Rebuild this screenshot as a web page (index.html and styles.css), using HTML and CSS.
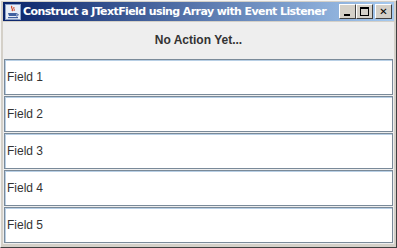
FILE: index.html
```html
<!DOCTYPE html>
<html lang="en">
<head>
    <meta charset="UTF-8">
    <title>Construct a JTextField using Array with Event Listener</title>
    <link rel="stylesheet" href="styles.css">
</head>
<body>
    <div class="ventana">
        <div class="titulo">
            <svg class="icono" width="16" height="16" viewBox="0 0 16 16">
                <rect x="0.5" y="0.5" width="15" height="15" fill="#e8eef8" stroke="#8aa0c8"/>
                <path d="M7 2 C5 4 9 5 7 7" stroke="#d04020" stroke-width="1.2" fill="none"/>
                <path d="M9 3 C8 5 10 5 9 7" stroke="#d04020" stroke-width="1" fill="none"/>
                <path d="M3 9 L12 9 L11 12 L4 12 Z" fill="#4060a0"/>
                <path d="M12 10 C14 10 14 12 11 12" stroke="#4060a0" fill="none"/>
                <rect x="3" y="13" width="10" height="1.2" fill="#4060a0"/>
            </svg>
            <span class="texto-titulo">Construct a JTextField using Array with Event Listener</span>
            <div class="botones">
                <span class="boton"><i class="min"></i></span>
                <span class="boton"><i class="max"></i></span>
                <span class="boton cerrar">✕</span>
            </div>
        </div>
        <div class="contenido">
            <div class="etiqueta">No Action Yet...</div>
            <div class="campo">Field 1</div>
            <div class="campo">Field 2</div>
            <div class="campo">Field 3</div>
            <div class="campo">Field 4</div>
            <div class="campo">Field 5</div>
        </div>
    </div>
</body>
</html>
```
FILE: styles.css
```css
body {
    margin: 0;
    padding: 0;
    background-color: #d4d0c8;
}
.ventana {
    width: 397px;
    height: 248px;
    box-sizing: border-box;
    padding: 1px 2px 3px 2px;
    background-color: #d4d0c8;
    border-left: 1px solid #f4f4f4;
    border-top: 1px solid #f4f4f4;
    border-right: 1px solid #404040;
    border-bottom: 1px solid #404040;
    display: flex;
    flex-direction: column;
}
.titulo {
    height: 19px;
    display: flex;
    align-items: center;
    padding: 0 2px 0 2px;
    margin-bottom: 1px;
    background: linear-gradient(to right, #0a246a, #a6caf0);
    color: #fff;
    font-family: "DejaVu Sans", sans-serif;
    font-size: 11px;
    font-weight: bold;
    flex-shrink: 0;
}
.icono {
    margin-right: 2px;
}
.texto-titulo {
    flex: 1;
    white-space: nowrap;
    letter-spacing: -0.6px;
}
.botones {
    display: flex;
}
.boton {
    width: 15px;
    height: 13px;
    background-color: #d4d0c8;
    border-top: 1px solid #fff;
    border-left: 1px solid #fff;
    border-right: 1px solid #404040;
    border-bottom: 1px solid #404040;
    position: relative;
    color: #000;
    font-size: 10px;
    font-weight: bold;
    line-height: 13px;
    text-align: center;
}
.cerrar {
    margin-left: 2px;
    font-family: "DejaVu Sans", sans-serif;
}
.min {
    position: absolute;
    left: 4px;
    bottom: 2px;
    width: 6px;
    height: 2px;
    background-color: #000;
}
.max {
    position: absolute;
    left: 3px;
    top: 2px;
    width: 7px;
    height: 6px;
    border: 1px solid #000;
    border-top-width: 2px;
}
.contenido {
    flex: 1;
    background-color: #eeeeee;
    display: grid;
    grid-template-rows: repeat(6, 1fr);
    gap: 1px;
    padding: 0 1px 1px 1px;
    font-family: "Liberation Sans", Arial, sans-serif;
    font-size: 12px;
    color: #333;
}
.etiqueta {
    display: flex;
    align-items: center;
    justify-content: center;
    font-weight: bold;
}
.campo {
    display: flex;
    align-items: center;
    padding-left: 2px;
    background-color: #fff;
    border: 1px solid #7a8a99;
    box-shadow: inset 1px 1px 0 #b8cfe5;
}
```
